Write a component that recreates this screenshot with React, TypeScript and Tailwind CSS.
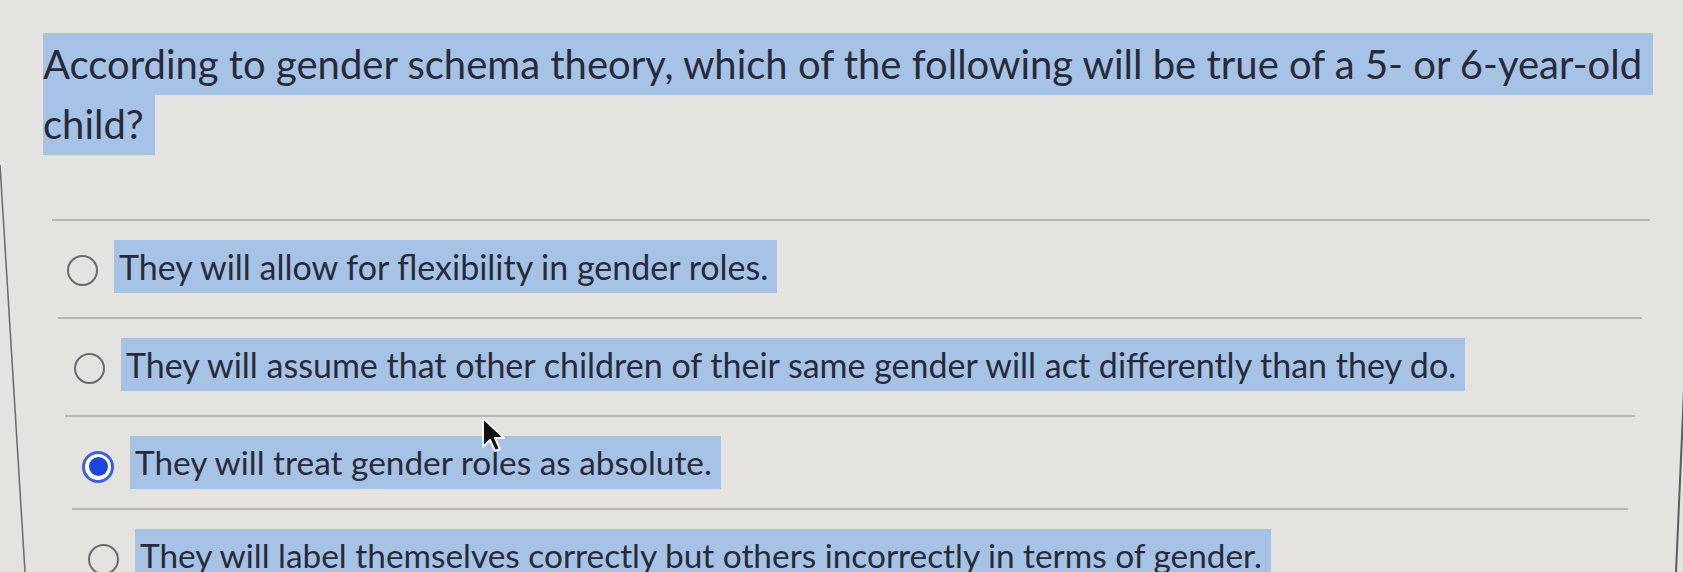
const options = [
  {
    text: "They will allow for flexibility in gender roles.",
    sep: "ml-[52px] mr-[33px]",
    row: "ml-[67px] pb-[24px]",
    size: "text-[34px]",
    checked: false,
  },
  {
    text: "They will assume that other children of their same gender will act differently than they do.",
    sep: "ml-[58px] mr-[41px]",
    row: "ml-[74px] pb-[24px]",
    size: "text-[34px]",
    checked: false,
  },
  {
    text: "They will treat gender roles as absolute.",
    sep: "ml-[65px] mr-[48px]",
    row: "ml-[82px] pb-[19px]",
    size: "text-[33.4px]",
    checked: true,
  },
  {
    text: "They will label themselves correctly but others incorrectly in terms of gender.",
    sep: "ml-[72px] mr-[55px]",
    row: "ml-[88px] pb-[19px]",
    size: "text-[33.4px]",
    checked: false,
  },
];

const Radio = ({ checked }: { checked: boolean }) =>
  checked ? (
    <span className="mt-[8px] flex h-[32px] w-[32px] shrink-0 items-center justify-center rounded-full border-[3px] border-[#3d5fe0] bg-white">
      <span className="h-[19px] w-[19px] rounded-full bg-[#1e45db]" />
    </span>
  ) : (
    <span className="mt-[8px] h-[31px] w-[31px] shrink-0 rounded-full border-2 border-[#6a6a6d]" />
  );

const Cursor = () => (
  <svg
    className="pointer-events-none absolute left-[481px] top-[416px]"
    width="26"
    height="38"
    viewBox="0 0 26 38"
  >
    <path
      d="M2 2 L2 31 L9 24 L14 35 L19 33 L14 22 L23 22 Z"
      fill="#111"
      stroke="#f4f4f4"
      strokeWidth="2"
      strokeLinejoin="round"
    />
  </svg>
);

export default function App() {
  return (
    <div className="relative h-screen w-full overflow-hidden bg-[#e4e3df] font-[family-name:Lato,sans-serif] text-[#262a3b]">
      {/* screen bezel edges from the photo */}
      <svg className="pointer-events-none absolute inset-0" width="1683" height="572">
        <line x1="0" y1="165" x2="25" y2="572" stroke="#6a6a6c" strokeWidth="1.5" />
        <line x1="1684" y1="390" x2="1676" y2="572" stroke="#5d5d5f" strokeWidth="2" />
      </svg>

      <div className="pl-[43px] pt-[34px]">
        <p className="whitespace-nowrap text-[40px] leading-[60px]">
          <span className="bg-[#a6c3e6] py-[7px] pr-[11px] box-decoration-clone">
            According to gender schema theory, which of the following will be true of a 5- or 6-year-old
            <br />
            child?
          </span>
        </p>
      </div>

      <div className="mt-[65px] flex flex-col">
        {options.map((o) => (
          <div key={o.text}>
            <div className={`h-[2px] bg-[#b8b6b1] ${o.sep}`} />
            <div className={`flex items-center gap-[16px] pt-[19px] ${o.row}`}>
              <Radio checked={o.checked} />
              <span
                className={`inline-block h-[53px] whitespace-nowrap bg-[#a6c3e6] pl-[5px] pr-[9px] leading-[53px] ${o.size}`}
              >
                {o.text}
              </span>
            </div>
          </div>
        ))}
      </div>

      <Cursor />
    </div>
  );
}
